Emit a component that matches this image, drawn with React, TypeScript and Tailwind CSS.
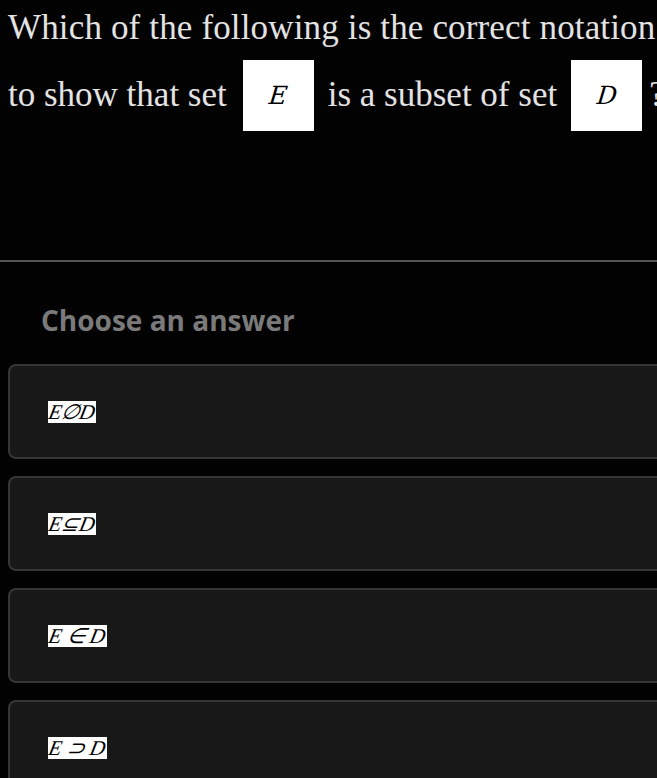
import React from "react";

function MathBox({ children, cls }: { children: React.ReactNode; cls: string }) {
  return (
    <span className={"shrink-0 inline-flex items-center justify-center w-[71px] h-[71px] bg-white text-black text-[25px] font-['DejaVu_Serif',serif] " + cls}>
      <span className="italic font-light inline-block -skew-x-6">{children}</span>
    </span>
  );
}

function Option({ label }: { label: string }) {
  return (
    <div className="w-[720px] h-[95px] rounded-[8px] border-2 border-[#363636] bg-[#181818] flex items-center pl-[38px] shrink-0">
      <span className="bg-white text-black italic text-[21px] leading-[22px] h-[22px] px-[1px] whitespace-pre font-['Liberation_Serif',serif]">
        <span className="inline-block -skew-x-12">{label}</span>
      </span>
    </div>
  );
}

export default function App() {
  return (
    <div className="w-[657px] h-[778px] bg-[#020202] overflow-hidden relative">
      <div className="pl-[8px] pt-[6px] text-[#e3e3e3] text-[35px] whitespace-nowrap font-['Liberation_Serif',serif]">
        <div className="leading-[44px] tracking-[0.15px]">Which of the following is the correct notation</div>
        <div className="flex items-center mt-[10px]">
          <span className="shrink-0">to show that set</span>
          <MathBox cls="ml-[16px] mr-[14px]">E</MathBox>
          <span className="shrink-0">is a subset of set</span>
          <MathBox cls="mx-[14px]">D</MathBox>
          <span className="shrink-0 -ml-[7px]">?</span>
        </div>
      </div>
      <div className="mt-[129px] h-[2px] bg-[#555555] w-full" />
      <div className="pl-[41px] pt-[40px] text-[28px] font-bold text-[#7a7a7a] leading-[36px] font-['Open_Sans',sans-serif]">
        Choose an answer
      </div>
      <div className="pl-[8px] pt-[26px] flex flex-col gap-[17px]">
        <Option label="E∅D" />
        <Option label="E⊆D" />
        <Option label="E ∈ D" />
        <Option label="E ⊃ D" />
      </div>
    </div>
  );
}
